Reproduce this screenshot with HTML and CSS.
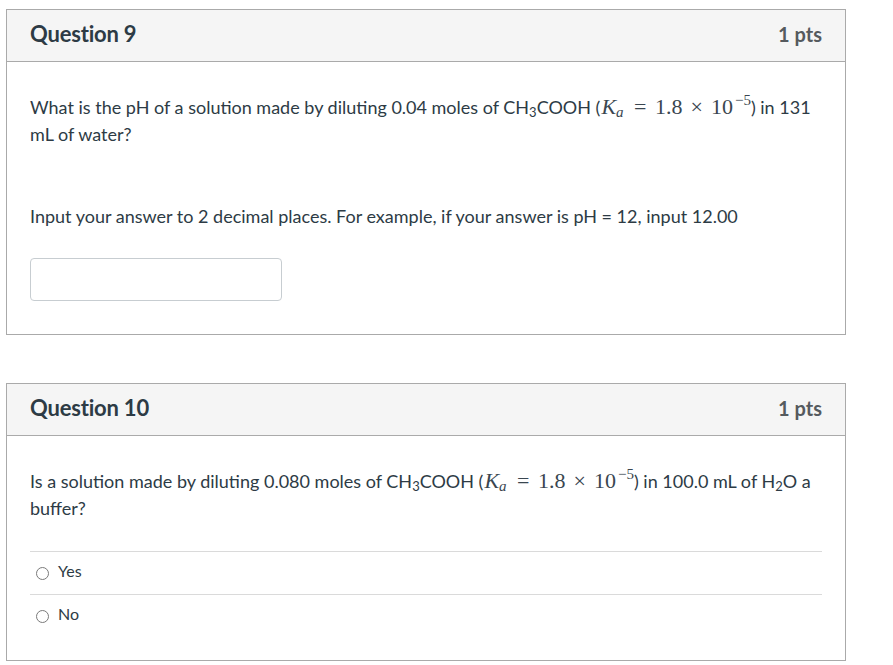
FILE: index.html
```html
<!DOCTYPE html>
<html>
<head>
<meta charset="utf-8">
<link rel="stylesheet" href="styles.css">
</head>
<body>
<div class="page">
  <div class="card">
    <div class="card-head">
      <h2 class="q-title">Question 9</h2>
      <span class="q-pts">1 pts</span>
    </div>
    <div class="card-body q9">
      <p class="text">What is the pH of a solution made by diluting 0.04 moles of CH<sub class="chem">3</sub>COOH (<span class="math"><i class="mk">K</i><sub class="msub"><i>a</i></sub><span class="rel">=</span>1.8<span class="bin">×</span>10<sup class="msup">−5</sup></span>) in 131 mL of water?</p>
      <p class="text p2">Input your answer to 2 decimal places. For example, if your answer is pH = 12, input 12.00</p>
      <input class="answer-input" type="text">
    </div>
  </div>

  <div class="card second">
    <div class="card-head">
      <h2 class="q-title">Question 10</h2>
      <span class="q-pts">1 pts</span>
    </div>
    <div class="card-body q10">
      <p class="text">Is a solution made by diluting 0.080 moles of CH<sub class="chem">3</sub>COOH (<span class="math"><i class="mk">K</i><sub class="msub"><i>a</i></sub><span class="rel">=</span>1.8<span class="bin">×</span>10<sup class="msup">−5</sup></span>) in 100.0 mL of H<sub class="chem">2</sub>O a buffer?</p>
      <div class="answers">
        <label class="answer"><span class="radio"></span><span class="answer-text">Yes</span></label>
        <label class="answer"><span class="radio"></span><span class="answer-text">No</span></label>
      </div>
    </div>
  </div>
</div>
</body>
</html>
```

FILE: styles.css
```css
* { box-sizing: border-box; }
html, body { margin: 0; padding: 0; background: #fff; }
body {
  font-family: Lato, "Open Sans", sans-serif;
  color: #2d3b45;
}
.page {
  padding: 9px 0 0 6px;
  width: 846px;
}
.card {
  width: 840px;
  border: 1px solid #aaaaaa;
  background: #fff;
}
.card.second { margin-top: 48px; }
.card-head {
  height: 52px;
  background: #f5f5f5;
  border-bottom: 1px solid #aaaaaa;
  display: flex;
  align-items: center;
  justify-content: space-between;
  padding: 0 23px 4px 23px;
}
.q-title {
  margin: 0;
  font-size: 22px;
  font-weight: 700;
  color: #2d3b45;
  letter-spacing: -0.2px;
}
.q-pts {
  font-size: 20px;
  font-weight: 700;
  color: #555a5e;
}
.card-body {
  padding: 32px 23px 0 23px;
}
.card-body.q9 { padding-bottom: 33px; }
.card-body.q10 { padding-bottom: 23px; }
.text {
  margin: 0;
  font-size: 18px;
  line-height: 27px;
}
.p2 { margin-top: 55px; }
.chem {
  font-size: 13px;
  vertical-align: -3px;
  line-height: 0;
}
.math {
  font-family: "Liberation Serif", "DejaVu Serif", serif;
  font-size: 22px;
  line-height: 0;
  color: #3a4650;
}
.math i { font-style: italic; }
.mk { margin-left: 1px; }
.msub {
  font-size: 15px;
  vertical-align: -3px;
  line-height: 0;
  margin-left: 0;
  margin-right: 2px;
}
.msup {
  font-size: 15px;
  vertical-align: 9px;
  line-height: 0;
  margin-left: 2px;
}
.rel { margin: 0 8.5px; }
.bin { margin: 0 8px; }
.answer-input {
  display: block;
  margin-top: 28px;
  width: 252px;
  height: 43px;
  border: 1px solid #c7cdd1;
  border-radius: 4px;
  background: #fff;
  padding: 0 8px;
  font: 16px Lato, sans-serif;
}
.answers { margin-top: 29px; }
.answer {
  display: flex;
  align-items: center;
  height: 43px;
  border-top: 1px solid #dadada;
  padding-left: 6px;
  padding-bottom: 5px;
}
.radio {
  width: 13px;
  height: 13px;
  border: 1px solid #7a7a7a;
  border-radius: 50%;
  margin-right: 9px;
  margin-top: 5px;
  background: #fff;
}
.answer-text { font-size: 16px; }
```
